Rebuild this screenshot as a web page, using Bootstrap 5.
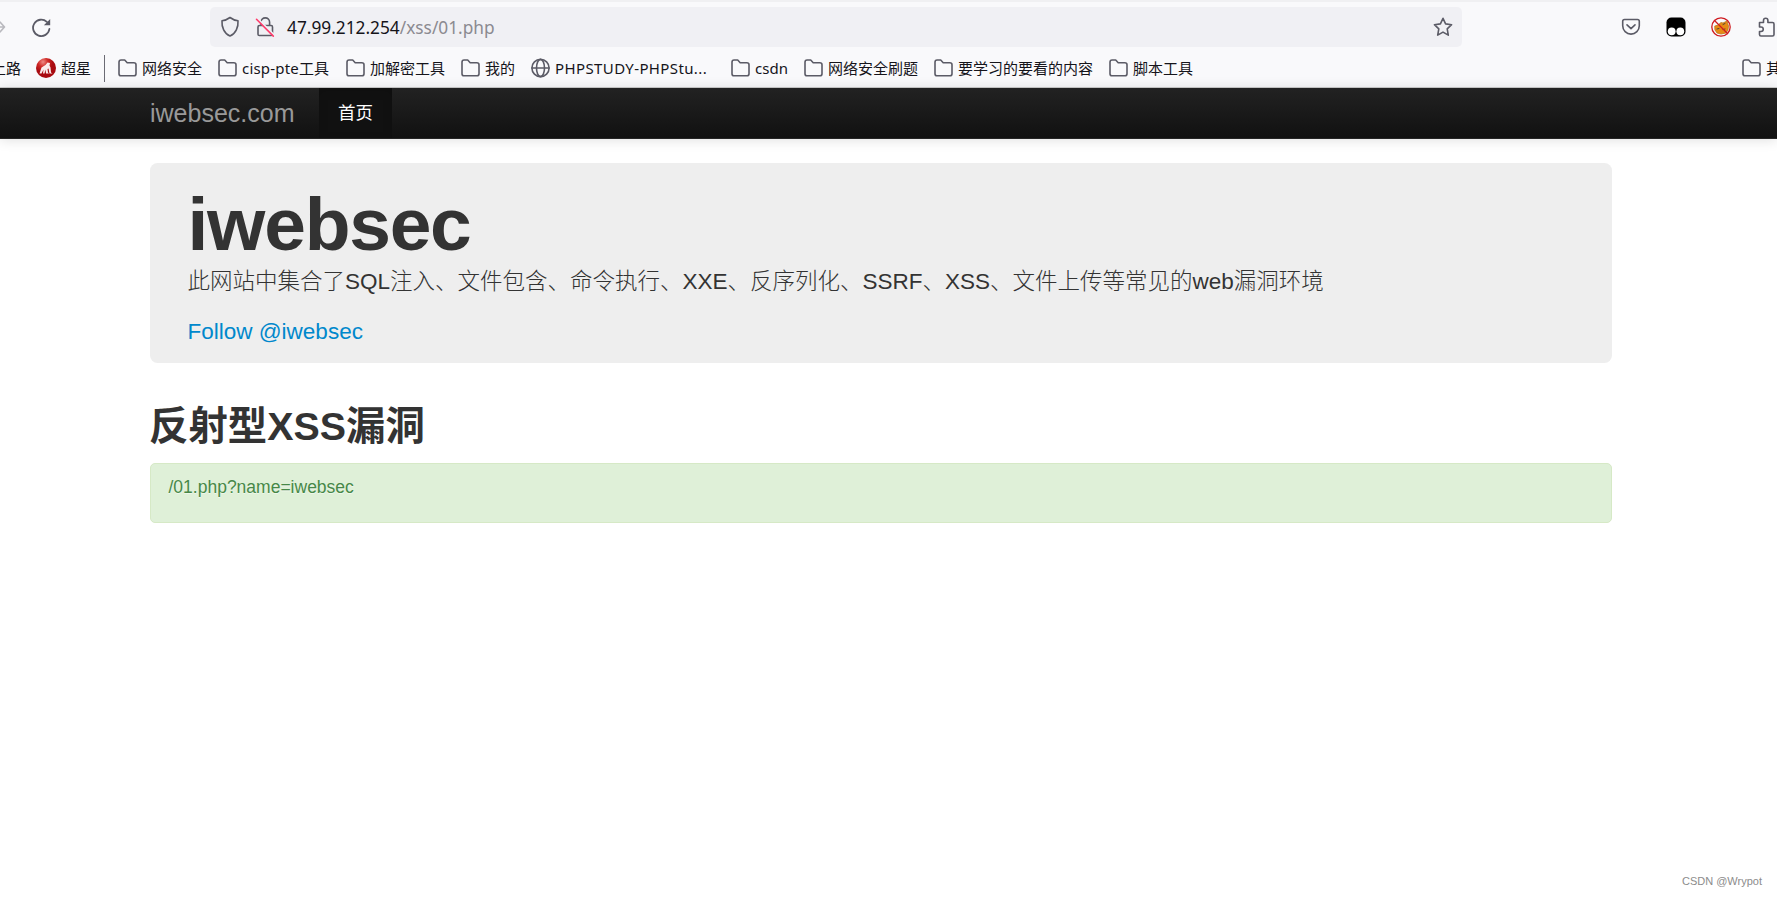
<!DOCTYPE html>
<html lang="zh-CN">
<head>
<meta charset="utf-8">
<title>iwebsec</title>
<link href="https://cdn.jsdelivr.net/npm/bootstrap@5.3.0/dist/css/bootstrap.min.css" rel="stylesheet">
<style>
body{height:897px;overflow:hidden;background:#fff;color:#333;font-family:"Liberation Sans","Noto Sans CJK SC",sans-serif;font-size:17.5px;line-height:25px}
.chrome{height:88px;background:#f9f9fb;border-top:2px solid #f0f0f2;border-bottom:1px solid #ccc;font-family:"Noto Sans","Noto Sans CJK SC",sans-serif;color:#15141a;overflow:hidden}
.chrome svg{display:block;flex:none;fill:none;stroke:#5b5b66;stroke-width:1.6;stroke-linejoin:round;stroke-linecap:round}
.tabedge{width:112px;height:2px;margin:-2px 0 0 1405px;background:#e3e3e6}
.toolrow{height:40px;margin-top:5px}
.reload{margin:2px 4px 0 26px}
.urlbox{flex:none;width:1252px;height:40px;background:#f0f0f4;border-radius:5px;margin-left:154px;padding:0 9px 0 10px}
.address{font-size:17.3px;margin-left:12px;padding-top:1px}
.address span{color:#8b8a90}
.addons{flex:none;margin-left:159px;gap:25px}
.marks{height:40px;font-size:15px;line-height:22px;gap:16px;padding-top:2px}
.bm{gap:5px;white-space:nowrap;flex:none}
.rule{width:1px;height:27px;background:#6b6b74;margin:0 -3px}
.topnav{height:51px;background:linear-gradient(#222,#111);border-bottom:1px solid #252525;box-shadow:0 1px 12px rgba(0,0,0,.13);padding:0}
.page{width:1462px;margin-left:150px}
.topnav .navbar-brand{color:#999;font-size:25px;line-height:25px;padding:0;margin:13px 25px 0 0;width:144px}
.topnav .nav-link{color:#fff;background:#111;box-shadow:inset 0 3px 10px rgba(0,0,0,.125);height:50px;width:73px;padding:13px 0 0 19px;line-height:25px}
.hero{margin-top:24px;height:200px;background:#eee;border-radius:7.5px;padding:24px 37.5px 0;font-size:22.5px;line-height:37.5px}
.hero h1{font-size:75px;line-height:75px;font-weight:700;letter-spacing:-1.25px;margin:0 0 1px}
.hero p{margin:0 0 12px;font-weight:200}
.hero a{color:#08c}
h2.topic{font-size:39.4px;font-weight:700;line-height:50px;margin:38px 0 12px -1px}
.result{height:60px;background:#dff0d8;border:1px solid #d6e9c6;border-radius:5px;color:#468847;text-shadow:0 1px 0 rgba(255,255,255,.5);padding:11px 17.5px}
.credit{right:15px;bottom:7px;font-size:11px;line-height:18px;color:#8c8c8c}
</style>
</head>
<body class="position-relative">
<svg width="0" height="0" class="position-absolute"><defs>
<symbol id="folder" viewBox="0 0 19 18"><path d="M1 3.2C1 1.9 1.800 1 3.100 1h3.600l2.500 2.700h6.600c1.300 0 2.200.8 2.200 2v9c0 1.300-.9 2.100-2.200 2.100H3.100C1.800 16.800 1 16 1 14.700z"/></symbol>
</defs></svg>
<div class="chrome">
  <div class="tabedge"></div>
  <div class="toolrow d-flex align-items-center">
    <svg width="6" height="20" viewBox="0 0 6 20" style="stroke:#b9b9be"><path d="M-6 10H4M0 5l4.500 5L0 15"/></svg>
    <svg width="20" height="20" viewBox="0 0 20 20" class="reload" style="stroke-width:1.800"><path d="M17.400 11A8.200 8.200 0 1 1 14.800 3.800"/><path d="M18.200 1v6.300h-6.300z" style="fill:#5b5b66;stroke:none"/></svg>
    <div class="urlbox d-flex align-items-center">
      <svg width="20" height="22" viewBox="0 0 20 22"><path d="M10 1.500q3.500 2.700 8 3.200c.5 6.300-2.200 12.800-8 15.300C4.200 17.500 1.500 11 2 4.700q4.500-.5 8-3.200z"/></svg>
      <svg width="20" height="22" viewBox="0 0 20 22" style="margin-left:15px"><path d="M6 9.500V6.200a4.300 4.300 0 0 1 8.600 0v3.300M3 11v7.200c0 .8.600 1.300 1.400 1.300h11.800c.8 0 1.300-.5 1.300-1.300v-7.300c0-.8-.5-1.400-1.300-1.400H4.500c-.9 0-1.500.6-1.500 1.500"/><path d="M2.500 2.500l17 17" style="stroke:#f0f0f4;stroke-width:2"/><path d="M1.500 3.300l16.800 16.800" style="stroke:#ff3b6b"/></svg>
      <div class="address">47.99.212.254<span>/xss/01.php</span></div>
      <svg width="20" height="20" viewBox="0 0 20 20" class="ms-auto"><path d="M10 1.300l2.600 5.600 6 .8-4.400 4.200 1.100 6.200-5.300-3-5.300 3 1.100-6.200-4.400-4.200 6-.8z"/></svg>
    </div>
    <div class="addons d-flex align-items-center">
      <svg width="20" height="18" viewBox="0 0 20 18"><path d="M3.500 1.500h13c1 0 1.800.8 1.800 1.800v4.500a8.300 8.300 0 0 1-16.600 0V3.300c0-1 .8-1.800 1.800-1.800zM6 6.800l4 3.800 4-3.800"/></svg>
      <svg width="20" height="20" viewBox="0 0 20 20" style="stroke:none"><rect x=".5" y=".5" width="19" height="19" rx="5" fill="#000"/><circle cx="5.700" cy="14.300" r="3.900" fill="#fff"/><circle cx="14.300" cy="14.300" r="3.900" fill="#fff"/></svg>
      <svg width="20" height="20" viewBox="0 0 20 20" style="stroke-width:1.300"><path d="M4 9l3-1 3-2.500 2 .5 4-2 1.500 5-.5 4-2 3-5 1-4-1-2-3z" style="fill:#e88a15;stroke:#b77a20;stroke-width:.8"/><path d="M6 12l2-.5M12 7.500l2-1M12 12.500l2-.5" style="stroke:#543;stroke-width:1"/><circle cx="10" cy="10" r="9.200" style="stroke:#cf1b20"/><path d="M3.500 3.500l13 13" style="stroke:#cf1b20"/></svg>
      <svg width="20" height="20" viewBox="0 0 20 20"><path d="M3.500 5.500h4V3.500a2.200 2.200 0 0 1 4.400 0v2h4.600c.9 0 1.500.6 1.500 1.500v10.500c0 .9-.6 1.500-1.500 1.500H5c-.9 0-1.500-.6-1.500-1.500v-3H5a2.200 2.200 0 0 0 0-4.500H3.500z"/></svg>
    </div>
  </div>
  <div class="marks d-flex align-items-center">
    <div class="bm" style="width:21px;margin-right:-1px"><span style="margin-left:-9px">上路</span></div>
    <div class="bm d-flex align-items-center"><svg width="20" height="20" viewBox="0 0 20 20" style="stroke:none"><defs><radialGradient id="red" cx=".35" cy=".2"><stop stop-color="#ef8b85"/><stop offset=".5" stop-color="#cf2825"/><stop offset="1" stop-color="#a80a10"/></radialGradient></defs><circle cx="10" cy="10" r="10" fill="url(#red)"/><path d="M3.500 15.500l2-6 4-2.500 2-2.500 2.500.5-.5 2.500 1 2 .5 5 1.500 1h-3l-1-5-1 .5.500 3.500 1 1h-3l-.5-4-1 4H7l.5-4-2 4z" fill="#fff" fill-opacity=".92"/></svg>超星</div>
    <div class="rule"></div>
    <div class="bm d-flex align-items-center"><svg width="19" height="18"><use href="#folder"/></svg>网络安全</div>
    <div class="bm d-flex align-items-center" style="width:112px;letter-spacing:.18px"><svg width="19" height="18"><use href="#folder"/></svg>cisp-pte工具</div>
    <div class="bm d-flex align-items-center"><svg width="19" height="18"><use href="#folder"/></svg>加解密工具</div>
    <div class="bm d-flex align-items-center"><svg width="19" height="18"><use href="#folder"/></svg>我的</div>
    <div class="bm d-flex align-items-center" style="width:184px;letter-spacing:.38px"><svg width="19" height="20" viewBox="0 0 19 20"><circle cx="9.500" cy="10" r="8.600"/><ellipse cx="9.500" cy="10" rx="4" ry="8.600"/><path d="M1 10h17"/></svg>PHPSTUDY-PHPStu...</div>
    <div class="bm d-flex align-items-center" style="width:57px"><svg width="19" height="18"><use href="#folder"/></svg>csdn</div>
    <div class="bm d-flex align-items-center"><svg width="19" height="18"><use href="#folder"/></svg>网络安全刷题</div>
    <div class="bm d-flex align-items-center"><svg width="19" height="18"><use href="#folder"/></svg>要学习的要看的内容</div>
    <div class="bm d-flex align-items-center"><svg width="19" height="18"><use href="#folder"/></svg>脚本工具</div>
    <div class="bm d-flex align-items-center ms-auto overflow-hidden" style="width:35px"><svg width="19" height="18"><use href="#folder"/></svg>其</div>
  </div>
</div>
<nav class="topnav navbar align-items-start">
  <div class="page d-flex align-items-start">
    <a class="navbar-brand" href="#">iwebsec.com</a>
    <a class="nav-link" href="#">首页</a>
  </div>
</nav>
<main class="page">
  <section class="hero">
    <h1>iwebsec</h1>
    <p>此网站中集合了SQL注入、文件包含、命令执行、XXE、反序列化、SSRF、XSS、文件上传等常见的web漏洞环境</p>
    <a class="text-decoration-none" href="#">Follow @iwebsec</a>
  </section>
  <h2 class="topic">反射型XSS漏洞</h2>
  <div class="result">/01.php?name=iwebsec</div>
</main>
<div class="credit position-absolute">CSDN @Wrypot</div>
</body>
</html>
